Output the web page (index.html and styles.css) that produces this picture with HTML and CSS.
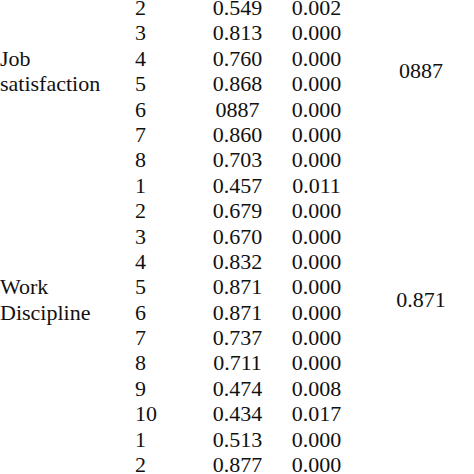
FILE: index.html
```html
<!DOCTYPE html>
<html>
<head>
<meta charset="utf-8">
<link rel="stylesheet" href="styles.css">
</head>
<body>
<div class="table">
  <div class="label g1">Job<br>satisfaction</div>
  <div class="num">1</div><div class="load"></div><div class="sig"></div>
  <div class="alpha g1">0887</div>
  <div class="num">2</div><div class="load">0.549</div><div class="sig">0.002</div>
  <div class="num">3</div><div class="load">0.813</div><div class="sig">0.000</div>
  <div class="num">4</div><div class="load">0.760</div><div class="sig">0.000</div>
  <div class="num">5</div><div class="load">0.868</div><div class="sig">0.000</div>
  <div class="num">6</div><div class="load">0887</div><div class="sig">0.000</div>
  <div class="num">7</div><div class="load">0.860</div><div class="sig">0.000</div>
  <div class="num">8</div><div class="load">0.703</div><div class="sig">0.000</div>

  <div class="label g2">Work<br>Discipline</div>
  <div class="num">1</div><div class="load">0.457</div><div class="sig">0.011</div>
  <div class="alpha g2">0.871</div>
  <div class="num">2</div><div class="load">0.679</div><div class="sig">0.000</div>
  <div class="num">3</div><div class="load">0.670</div><div class="sig">0.000</div>
  <div class="num">4</div><div class="load">0.832</div><div class="sig">0.000</div>
  <div class="num">5</div><div class="load">0.871</div><div class="sig">0.000</div>
  <div class="num">6</div><div class="load">0.871</div><div class="sig">0.000</div>
  <div class="num">7</div><div class="load">0.737</div><div class="sig">0.000</div>
  <div class="num">8</div><div class="load">0.711</div><div class="sig">0.000</div>
  <div class="num">9</div><div class="load">0.474</div><div class="sig">0.008</div>
  <div class="num">10</div><div class="load">0.434</div><div class="sig">0.017</div>

  <div class="label g3"></div>
  <div class="num">1</div><div class="load">0.513</div><div class="sig">0.000</div>
  <div class="alpha g3"></div>
  <div class="num">2</div><div class="load">0.877</div><div class="sig">0.000</div>
</div>
</body>
</html>
```

FILE: styles.css
```css
html, body {
  margin: 0;
  padding: 0;
  background: #ffffff;
  overflow: hidden;
}

body {
  width: 474px;
  height: 474px;
  font-family: "Liberation Serif", "Times New Roman", serif;
  font-size: 22px;
  color: #111111;
}

.table {
  display: grid;
  grid-template-columns: 135px 65px 75px 83px 126px;
  grid-auto-rows: 25.4px;
  line-height: 25.4px;
  margin-top: -30.4px;
  width: 484px;
}

.label {
  grid-column: 1;
  align-self: center;
}

.num {
  grid-column: 2;
  text-align: left;
}

.load {
  grid-column: 3;
  text-align: center;
}

.sig {
  grid-column: 4;
  text-align: center;
}

.alpha {
  grid-column: 5;
  align-self: center;
  text-align: center;
}

.g1 { grid-row: 1 / span 8; }
.g2 { grid-row: 9 / span 10; }
.g3 { grid-row: 19 / span 2; }
```
